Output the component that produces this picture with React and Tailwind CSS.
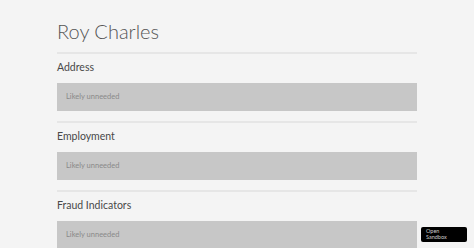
import React from 'react'

const sections = [
  { title: 'Address', note: 'Likely unneeded' },
  { title: 'Employment', note: 'Likely unneeded' },
  { title: 'Fraud Indicators', note: 'Likely unneeded' },
]

function Section({ title, note }) {
  return (
    <div>
      <div className="h-[2px] bg-[#e6e6e6]" />
      <div className="h-[29px] flex items-center pb-[1px] text-[10.5px] text-[#484848]">{title}</div>
      <div className="h-[28px] flex items-center pl-[9px] bg-[#c7c7c7] text-[7.5px] text-[#8a8a8a]">{note}</div>
      <div className="h-[10px]" />
    </div>
  )
}

export default function App() {
  return (
    <div className="min-h-screen bg-[#f4f4f4] font-['Lato',sans-serif] overflow-hidden">
      <div className="w-[360px] ml-[57px]">
        <h1 className="pt-[18px] pb-[7px] text-[20px] leading-[27px] font-light text-[#555]">Roy Charles</h1>
        {sections.map((s) => (
          <Section key={s.title} {...s} />
        ))}
      </div>

      {/* sandbox badge */}
      <button className="fixed left-[421px] top-[227px] w-[46px] h-[15px] rounded-[2px] bg-black px-[5px] text-left text-[5.5px] leading-[5.5px] text-[#ccc]">
        Open
        <br />
        Sandbox
      </button>
    </div>
  )
}
